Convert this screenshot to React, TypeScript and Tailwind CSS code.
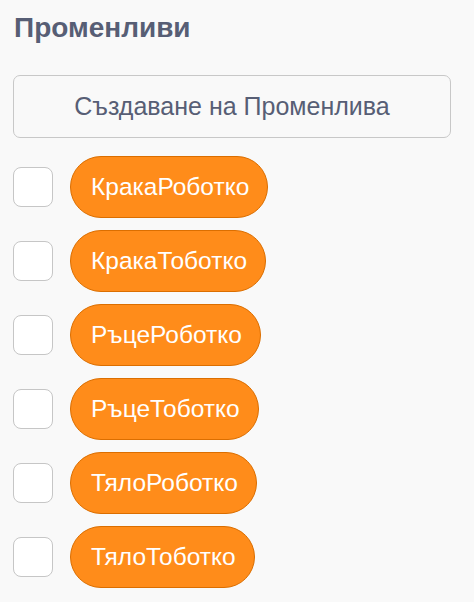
import React from "react";

const vars = [
  "КракаРоботко",
  "КракаТоботко",
  "РъцеРоботко",
  "РъцеТоботко",
  "ТялоРоботко",
  "ТялоТоботко",
];

export default function App() {
  return (
    <div
      className="w-[474px] h-[602px] bg-[#f9f9f9] overflow-hidden"
      style={{ fontFamily: '"Liberation Sans", Arial, sans-serif' }}
    >
      <div className="pl-[14px] pt-[10px] text-[28px] leading-[36px] font-bold text-[#575e75]">
        Променливи
      </div>
      <div className="ml-[13px] mt-[29px] w-[438px] h-[63px] rounded-[7px] border-[1.5px] border-[#c8c8c8] bg-[#f9f9f9] flex items-center justify-center text-[25px] text-[#575e75]">
        Създаване на Променлива
      </div>
      <div className="mt-[18px] flex flex-col gap-[12px]">
        {vars.map((v) => (
          <div key={v} className="flex items-center h-[62px]">
            <div className="ml-[13px] w-[40px] h-[40px] rounded-[8px] border-[1.5px] border-[#c6c6c6] bg-white" />
            <div className="ml-[17px] h-[62px] rounded-full bg-[#ff8c1a] border border-[#db6e00] flex items-center pl-[20px] pr-[18px] text-[24.5px] text-white">
              {v}
            </div>
          </div>
        ))}
      </div>
    </div>
  );
}
